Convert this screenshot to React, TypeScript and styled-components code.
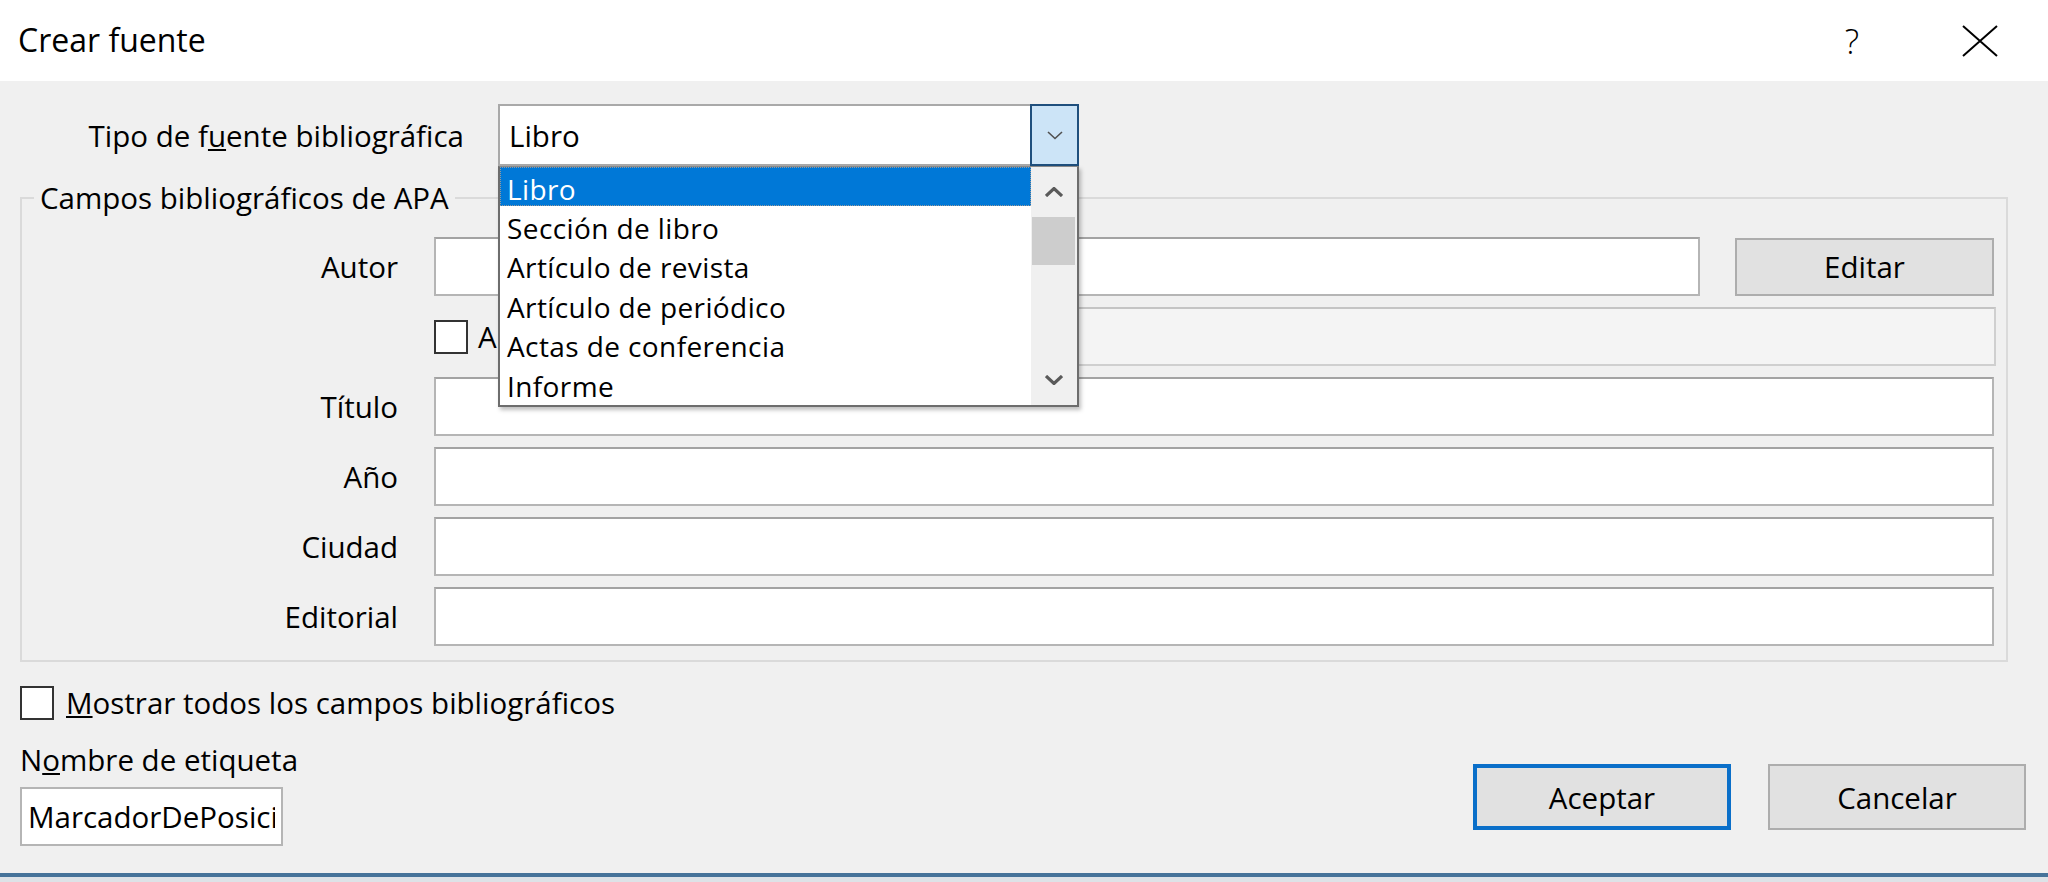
import styled, { createGlobalStyle } from "styled-components";

const GlobalStyle = createGlobalStyle`
  html, body {
    margin: 0;
    padding: 0;
  }
  body {
    font-family: "Open Sans", "Noto Sans", sans-serif;
    color: #000;
    background: #f0f0f0;
  }
`;

const sourceTypes = [
  "Libro",
  "Sección de libro",
  "Artículo de revista",
  "Artículo de periódico",
  "Actas de conferencia",
  "Informe",
];

const fields = ["Título", "Año", "Ciudad", "Editorial"];

function Chevron({ up, bold }: { up?: boolean; bold?: boolean }) {
  const w = bold ? 18 : 16;
  const h = bold ? 10 : 9;
  return (
    <svg width={w} height={h} viewBox={`0 0 ${w} ${h}`}>
      <polyline
        points={up ? `1,${h - 1} ${w / 2},1.5 ${w - 1},${h - 1}` : `1,1 ${w / 2},${h - 1.5} ${w - 1},1`}
        fill="none"
        stroke={bold ? "#5a5a5a" : "#505050"}
        strokeWidth={bold ? 3.2 : 1.6}
      />
    </svg>
  );
}

function FieldRow({ label }: { label: string }) {
  return (
    <>
      <FieldLabel>{label}</FieldLabel>
      <TextBox />
    </>
  );
}

export default function App() {
  return (
    <>
      <GlobalStyle />
      <Dialog>
        <TitleBar>
          <Title>Crear fuente</Title>
          <TitleButton>?</TitleButton>
          <TitleButton>
            <svg width="36" height="32" viewBox="0 0 36 32">
              <path d="M1 1 L35 31 M35 1 L1 31" stroke="#000" strokeWidth="2" fill="none" />
            </svg>
          </TitleButton>
        </TitleBar>

        <Body>
          <TypeRow>
            <TypeLabel>
              Tipo de f<u>u</u>ente bibliográfica
            </TypeLabel>
            <Combo>
              <ComboField>Libro</ComboField>
              <ComboButton>
                <Chevron />
              </ComboButton>
              <DropList>
                <Items>
                  {sourceTypes.map((t, i) => (
                    <Item key={t} $selected={i === 0}>
                      {t}
                    </Item>
                  ))}
                </Items>
                <ScrollBar>
                  <ScrollArrow>
                    <Chevron up bold />
                  </ScrollArrow>
                  <Thumb />
                  <Track />
                  <ScrollArrow>
                    <Chevron bold />
                  </ScrollArrow>
                </ScrollBar>
              </DropList>
            </Combo>
          </TypeRow>

          <GroupBox>
            <Legend>Campos bibliográficos de APA</Legend>
            <FieldGrid>
              <FieldLabel>Autor</FieldLabel>
              <FieldLine>
                <TextBox />
                <EditButton>Editar</EditButton>
              </FieldLine>

              <span />
              <FieldLine>
                <CheckBox />
                <CheckText>Autor corporativo</CheckText>
                <TextBox $disabled />
              </FieldLine>

              {fields.map((f) => (
                <FieldRow key={f} label={f} />
              ))}
            </FieldGrid>
          </GroupBox>

          <ShowAllRow>
            <CheckBox />
            <CheckText>
              <u>M</u>ostrar todos los campos bibliográficos
            </CheckText>
          </ShowAllRow>

          <BottomRow>
            <TagBlock>
              <TagLabel>
                N<u>o</u>mbre de etiqueta
              </TagLabel>
              <TagInput defaultValue="MarcadorDePosición1" />
            </TagBlock>
            <Buttons>
              <DialogButton $primary>Aceptar</DialogButton>
              <DialogButton>Cancelar</DialogButton>
            </Buttons>
          </BottomRow>
        </Body>
        <BottomEdge />
      </Dialog>
    </>
  );
}

const Dialog = styled.div`
  width: 2048px;
  height: 882px;
  display: flex;
  flex-direction: column;
  overflow: hidden;
  background: #f0f0f0;
`;

const TitleBar = styled.div`
  height: 81px;
  flex: none;
  background: #fff;
  display: flex;
  align-items: center;
  padding: 0 4px 0 18px;
`;

const Title = styled.div`
  flex: 1;
  font-size: 32px;
  padding-bottom: 2px;
`;

const TitleButton = styled.div`
  width: 128px;
  height: 81px;
  display: flex;
  align-items: center;
  justify-content: center;
  font-size: 34px;
  font-weight: 300;
  &:first-of-type {
    padding-right: 6px;
  }
`;

const Body = styled.div`
  flex: 1;
  display: flex;
  flex-direction: column;
  padding: 23px 22px 0 20px;
  font-size: 29.5px;
`;

const TypeRow = styled.div`
  display: flex;
  align-items: center;
  gap: 34px;
  position: relative;
  z-index: 2;
`;

const TypeLabel = styled.div`
  width: 444px;
  text-align: right;
`;

const Combo = styled.div`
  position: relative;
  width: 581px;
  height: 62px;
  display: flex;
`;

const ComboField = styled.div`
  flex: 1;
  box-sizing: border-box;
  height: 62px;
  background: #fff;
  border: 2px solid #a9a9a9;
  border-right: none;
  padding-left: 9px;
  display: flex;
  align-items: center;
`;

const ComboButton = styled.div`
  width: 49px;
  box-sizing: border-box;
  height: 62px;
  background: #cce4f7;
  border: 2px solid #1f4f7d;
  display: flex;
  align-items: center;
  justify-content: center;
`;

const DropList = styled.div`
  position: absolute;
  top: 62px;
  left: 0;
  width: 581px;
  height: 241px;
  box-sizing: border-box;
  background: #fff;
  border: 2px solid #6d6d6d;
  border-top: 1px solid #8a8a8a;
  box-shadow: 2px 3px 4px rgba(0, 0, 0, 0.25);
  display: flex;
`;

const Items = styled.div`
  flex: 1;
  display: flex;
  flex-direction: column;
`;

const Item = styled.div<{ $selected?: boolean }>`
  height: 39.4px;
  box-sizing: border-box;
  padding: 4px 0 0 7px;
  display: flex;
  align-items: center;
  font-size: 28px;
  letter-spacing: 0.4px;
  background: ${({ $selected }) => ($selected ? "#0078d7" : "transparent")};
  color: ${({ $selected }) => ($selected ? "#fff" : "#000")};
  outline: ${({ $selected }) => ($selected ? "1px dotted #9a9a9a" : "none")};
  outline-offset: -1px;
`;

const ScrollBar = styled.div`
  width: 46px;
  background: #f0f0f0;
  display: flex;
  flex-direction: column;
`;

const ScrollArrow = styled.div`
  height: 50px;
  display: flex;
  align-items: center;
  justify-content: center;
`;

const Thumb = styled.div`
  height: 48px;
  margin: 0 2px 0 1px;
  background: #cdcdcd;
`;

const Track = styled.div`
  flex: 1;
`;

const GroupBox = styled.fieldset`
  margin: 12px 18px 0 0;
  padding: 19px 12px 14px 0;
  border: 2px solid #dadada;
  min-width: 0;
`;

const Legend = styled.legend`
  margin-left: 12px;
  padding: 0 6px;
  line-height: 40px;
`;

const FieldGrid = styled.div`
  display: grid;
  grid-template-columns: 376px 1fr;
  grid-auto-rows: 59px;
  column-gap: 36px;
  row-gap: 11px;
`;

const FieldLabel = styled.div`
  display: flex;
  align-items: center;
  justify-content: flex-end;
`;

const FieldLine = styled.div`
  display: flex;
  align-items: center;
  gap: 10px;
`;

const TextBox = styled.div<{ $disabled?: boolean }>`
  flex: 1;
  box-sizing: border-box;
  height: 59px;
  background: ${({ $disabled }) => ($disabled ? "#f4f4f4" : "#fff")};
  border: 2px solid ${({ $disabled }) => ($disabled ? "#cfcfcf" : "#b5b5b5")};
  border-top-color: ${({ $disabled }) => ($disabled ? "#c4c4c4" : "#a3a3a3")};
  margin-left: ${({ $disabled }) => ($disabled ? "24px" : "0")};
  margin-right: ${({ $disabled }) => ($disabled ? "-2px" : "0")};
`;

const EditButton = styled.div`
  width: 259px;
  height: 58px;
  margin-left: 25px;
  box-sizing: border-box;
  background: #e1e1e1;
  border: 2px solid #adadad;
  display: flex;
  align-items: center;
  justify-content: center;
`;

const CheckBox = styled.div`
  width: 34px;
  height: 34px;
  flex: none;
  box-sizing: border-box;
  background: #fff;
  border: 2px solid #333;
`;

const CheckText = styled.div`
  white-space: nowrap;
`;

const ShowAllRow = styled.div`
  display: flex;
  align-items: center;
  gap: 12px;
  margin-top: 20px;
`;

const BottomRow = styled.div`
  display: flex;
  justify-content: space-between;
  align-items: flex-start;
  margin-top: 17px;
`;

const TagBlock = styled.div`
  display: flex;
  flex-direction: column;
`;

const TagLabel = styled.div`
  line-height: 40px;
`;

const TagInput = styled.input`
  margin-top: 7px;
  width: 263px;
  height: 59px;
  box-sizing: border-box;
  border: 2px solid #b5b5b5;
  background: #fff;
  font: inherit;
  font-size: 29.5px;
  padding: 0 6px;
  outline: none;
`;

const Buttons = styled.div`
  display: flex;
  gap: 37px;
  margin-top: 24px;
`;

const DialogButton = styled.div<{ $primary?: boolean }>`
  width: 258px;
  height: 66px;
  box-sizing: border-box;
  background: #e1e1e1;
  border: ${({ $primary }) => ($primary ? "4px solid #0a6fc9" : "2px solid #adadad")};
  display: flex;
  align-items: center;
  justify-content: center;
`;

const BottomEdge = styled.div`
  height: 5px;
  flex: none;
  border-top: 4px solid #46739a;
  background: #dde2e7;
`;
